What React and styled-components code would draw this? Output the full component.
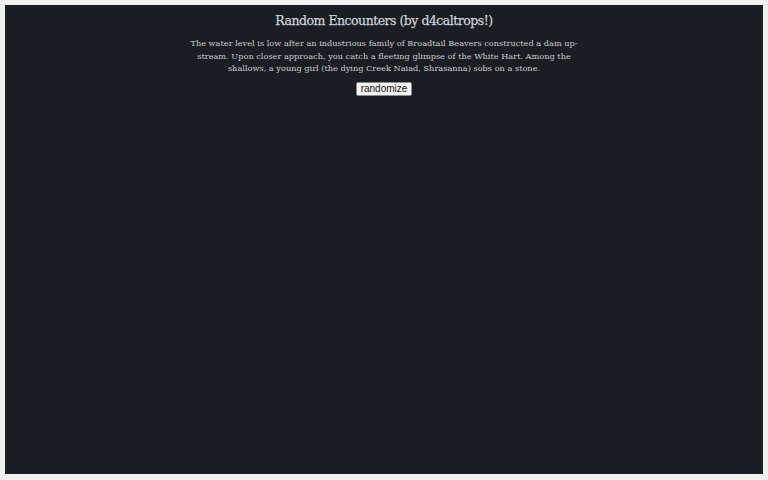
import React from "react";
import styled, { createGlobalStyle } from "styled-components";

const Global = createGlobalStyle`
  html, body {
    margin: 0;
    padding: 0;
    background: #f0f0f1;
  }
  body {
    padding: 5px 5px 6px;
  }
`;

const Panel = styled.main`
  height: 469px;
  background: #1a1d21;
  color: #c9ced3;
  font-family: "DejaVu Serif", "Liberation Serif", serif;
  display: flex;
  flex-direction: column;
  align-items: center;
  padding-top: 7px;
  box-sizing: border-box;
`;

const Title = styled.h1`
  margin: 0;
  font-size: 12.5px;
  font-weight: 400;
  letter-spacing: -0.5px;
  color: #cbd2da;
  line-height: 18px;
  -webkit-text-stroke: 0.25px #cbd2da;
`;

const Story = styled.p`
  margin: 7px 0 0;
  width: 400px;
  font-size: 8.2px;
  line-height: 12.5px;
  text-align: center;
  color: #c8cdd2;
`;

const RollButton = styled.button`
  margin-top: 7px;
  font-family: "Liberation Sans", Arial, sans-serif;
  font-size: 10px;
  line-height: 12px;
  padding: 0 4px;
  min-height: 14px;
  background: #f4f4f4;
  color: #111;
  border: 1px solid #8a8a8a;
  border-radius: 2px;
`;

export default function App() {
  return (
    <>
      <Global />
      <Panel>
        <Title>Random Encounters (by d4caltrops!)</Title>
        <Story>
          The water level is low after an industrious family of Broadtail Beavers constructed a dam up-stream. Upon closer approach, you catch a fleeting glimpse of the White Hart. Among the shallows, a young girl (the dying Creek Naiad, Shrasanna) sobs on a stone.
        </Story>
        <RollButton>randomize</RollButton>
      </Panel>
    </>
  );
}
